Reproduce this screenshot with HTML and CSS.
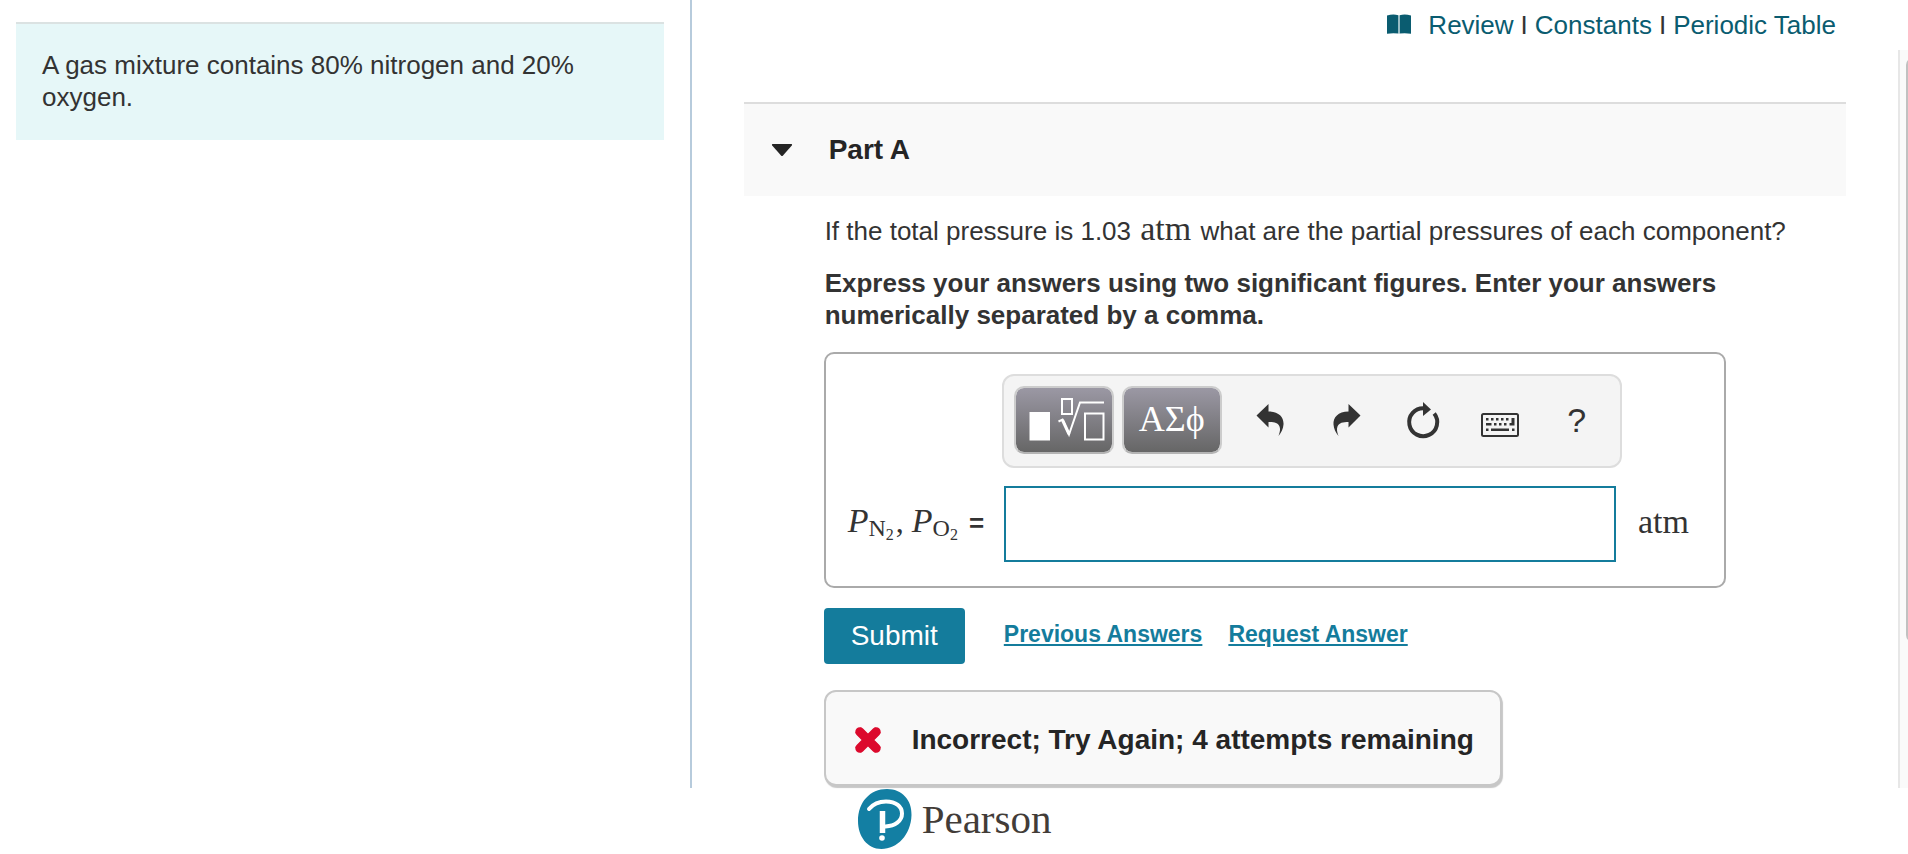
FILE: index.html
```html
<!DOCTYPE html>
<html lang="en">
<head>
    <meta charset="UTF-8">
    <meta name="viewport" content="width=device-width, initial-scale=1.0">
    <title>Part A</title>
    <link rel="stylesheet" href="styles.css">
</head>
<body>
    <div class="layout">
        <!-- Problem introduction -->
        <aside class="intro">
            <p class="intro-card">A gas mixture contains 80% nitrogen and 20% oxygen.</p>
        </aside>

        <main class="problem">
            <nav class="resources">
                <svg class="book-icon" width="24" height="20" viewBox="0 0 24 20" aria-hidden="true">
                    <path fill="#0a5c70" d="M0 1.500Q6 -.2 11.300 1.200V19.600Q6 18.600 0 19.800ZM12.700 1.200Q18 -.2 24 1.500V19.800Q18 18.600 12.700 19.600Z"/>
                    <path fill="#8bb5be" d="M11.300 1.500h1.400v18h-1.400z"/>
                </svg>
                <a href="#">Review</a> I <a href="#">Constants</a> I <a href="#">Periodic Table</a>
            </nav>

            <div class="scroll-area">
                <div class="content">
                    <button class="part-header" type="button">
                        <svg width="22" height="14" viewBox="0 0 22 14" aria-hidden="true">
                            <path fill="#252525" d="M1.800 1h18.400q1.600 0 .6 1.400L12 12.400q-1 1-2 0L1.200 2.400Q.2 1 1.800 1z"/>
                        </svg>
                        Part A
                    </button>

                    <div class="part-body">
                        <p class="question">If the total pressure is 1.03 <span class="unit">atm</span> what are the partial pressures of each component?</p>
                        <p class="instructions">Express your answers using two significant figures. Enter your answers numerically separated by a comma.</p>

                        <!-- Answer entry -->
                        <div class="answer-box">
                            <div class="toolbar">
                                <button class="palette" type="button" aria-label="Templates">
                                    <svg width="96" height="64" viewBox="2 2 96 64" fill="none" stroke="#fff" stroke-width="2">
                                        <path fill="#fff" stroke="none" d="M15.500 26H36v28.500H15.500z"/>
                                        <path d="M48 13h10v15H48zM71 27.500h18.500V53.500H71z"/>
                                        <path d="M44.500 35.500l4-2 6.500 15L66 16.500h24"/>
                                        <path stroke-width="3" d="M48.500 34l6.500 14"/>
                                    </svg>
                                </button>
                                <button class="palette" type="button">ΑΣϕ</button>
                                <div class="tools">
                                    <button type="button" aria-label="Undo">
                                        <svg width="40" height="40" viewBox="0 0 40 40">
                                            <path fill="#333" d="M6.500 15.500L18.500 4v7.500C29 11.500 34 17.500 33.500 24.500c-.3 4-2 8-5 11.500 1.500-4 2-7 1-9.500-1.500-3.800-5.500-4.500-11-4.500v5.500z"/>
                                        </svg>
                                    </button>
                                    <button type="button" aria-label="Redo">
                                        <svg width="40" height="40" viewBox="0 0 40 40">
                                            <path fill="#333" d="M33.500 15.500L21.500 4v7.500C11 11.500 6 17.500 6.500 24.500c.3 4 2 8 5 11.500-1.500-4-2-7-1-9.500 1.500-3.800 5.500-4.500 11-4.500v5.500z"/>
                                        </svg>
                                    </button>
                                    <button type="button" aria-label="Reset">
                                        <svg width="40" height="40" viewBox="0 0 40 40">
                                            <path fill="none" stroke="#333" stroke-width="4" d="M21 8.200A14 14 0 1 0 31.200 13.500"/>
                                            <path fill="#333" d="M20 2l8 7.500-8 6.500z"/>
                                        </svg>
                                    </button>
                                    <button type="button" aria-label="Keyboard shortcuts">
                                        <svg width="40" height="40" viewBox="0 0 40 40">
                                            <rect x="2" y="14" width="36" height="22" rx="1.500" fill="none" stroke="#333" stroke-width="2"/>
                                            <path fill="#333" d="M6 18h2.500v2.500H6zM11 18h2.500v2.500H11zM16 18h2.500v2.500H16zM21 18h2.500v2.500H21zM26 18h2.500v2.500H26zM31.500 18h3V25.500h-5v-2.500h2zM6 23h5.500V25.500H6zM14 23h2.500V25.500H14zM19 23h2.500V25.500H19zM24 23h2.500V25.500H24zM6 28.500h2.500v2.500H6zM11 28.500h18v2.500h-18zM32 28.500h2.500v2.500h-2.500z"/>
                                        </svg>
                                    </button>
                                    <button type="button">?</button>
                                </div>
                            </div>
                            <label class="answer-label" for="answer"><i>P</i><sub>N<sub>2</sub></sub><span class="comma">,</span><i>P</i><sub>O<sub>2</sub></sub><span class="equals">=</span></label>
                            <input class="answer-input" type="text" id="answer" name="answer">
                            <span class="answer-unit">atm</span>
                        </div>

                        <div class="actions">
                            <button class="submit" type="submit">Submit</button>
                            <a href="#">Previous Answers</a>
                            <a href="#">Request Answer</a>
                        </div>

                        <div class="feedback">
                            <svg width="28" height="28" viewBox="0 0 28 28" aria-hidden="true">
                                <path fill="none" stroke="#dc0a2d" stroke-width="8" stroke-linecap="square" d="M6.800 6.800l14.400 14.400M21.200 6.800L6.800 21.200"/>
                                <path fill="none" stroke="#dc0a2d" stroke-width="9" stroke-linecap="round" d="M5.800 5.800l16.400 16.400M22.200 5.800L5.800 22.200"/>
                            </svg>
                            Incorrect; Try Again; 4 attempts remaining
                        </div>
                    </div>
                </div>
                <div class="scroll-track"><div class="scroll-thumb"></div></div>
            </div>
        </main>

        <footer class="brand">
            <svg width="56" height="62" viewBox="0 0 56 62" aria-hidden="true">
                <path fill="#137fa3" d="M30 1C45 1 55 12 54.500 27 54 47 40 61 24.500 61 10 61 1 48 1 33 1 14 13 1 30 1z"/>
                <g fill="none" stroke="#fff" stroke-linecap="round">
                    <path stroke-width="4" d="M12 21C17 15 23 13.500 29 13.500 39 13.500 45 18.500 45 25.500 45 33 38 38 28.500 38.500"/>
                    <path stroke-width="5.500" stroke-linecap="butt" d="M25.500 23v22"/>
                </g>
                <circle cx="25" cy="50" r="2.800" fill="#fff"/>
            </svg>
            Pearson
        </footer>
    </div>
</body>
</html>
```

FILE: styles.css
```css
* {
    box-sizing: border-box;
}
body {
    margin: 0;
    background-color: #fff;
    color: #333;
    font-family: "Liberation Sans", Arial, sans-serif;
    font-size: 26px;
    line-height: 32px;
}
p {
    margin: 0;
}
button {
    font-family: inherit;
    cursor: pointer;
}
svg {
    display: block;
    flex-shrink: 0;
}
.layout {
    display: grid;
    grid-template-columns: 29fr 51fr;
}

/* Left column */
.intro {
    padding: 22px 26px 0 16px;
    border-right: 2px solid #b7cbdc;
}
.intro-card {
    padding: 25px 26px 27px;
    border-top: 2px solid #dbe2e2;
    background-color: #e6f7f8;
}

/* Right column */
.problem {
    min-width: 0;
}
.resources {
    display: flex;
    justify-content: flex-end;
    gap: 7px;
    height: 50px;
    padding: 9px 72px 0 0;
}
.resources a {
    color: #0a5c70;
    text-decoration: none;
}
.book-icon {
    margin: 5px 10px 0 0;
}
.scroll-area {
    display: flex;
}
.content {
    flex: 1;
    padding: 52px 52px 2px;
}
.scroll-track {
    width: 10px;
    padding: 8px 0 0 6px;
    border-left: 2px solid #e7e7e7;
    background-color: #fafafa;
    overflow: hidden;
}
.scroll-thumb {
    width: 14px;
    height: 80%;
    border-radius: 7px;
    background-color: #c1c1c1;
}
.part-header {
    display: flex;
    align-items: center;
    gap: 36px;
    width: 100%;
    height: 94px;
    padding: 0 28px 0 27px;
    border: none;
    border-top: 2px solid #ddd;
    background-color: #f9f9f9;
    color: #252525;
    font-size: 28px;
    font-weight: bold;
}
.part-body {
    padding: 19px 0 0 80px;
}
.question,
.instructions {
    margin-bottom: 20px;
    padding-left: 1px;
}
.instructions {
    font-weight: bold;
}
.unit,
.answer-unit {
    font-family: "Liberation Serif", "Times New Roman", serif;
    font-size: 34px;
    line-height: 1;
}
.unit {
    padding: 0 2px;
    line-height: 0;
}

/* Answer entry */
.answer-box {
    display: grid;
    grid-template-columns: 176px 1fr 102px;
    row-gap: 18px;
    align-items: center;
    margin: 21px 120px 0 0;
    padding: 20px 0 24px;
    border: 2px solid #aaa;
    border-radius: 10px;
}
.toolbar {
    grid-column: 2;
    display: flex;
    gap: 8px;
    padding: 10px 0 12px 10px;
    border: 2px solid #ddd;
    border-radius: 12px;
    background-color: #f4f4f4;
}
.palette {
    width: 100px;
    height: 68px;
    padding: 0 0 2px;
    border: 2px solid #ccc;
    border-bottom-color: #b4b4b4;
    border-radius: 10px;
    background: linear-gradient(#9b98a4, #666);
    background-clip: padding-box;
    color: #fff;
    font-family: "Liberation Serif", "Times New Roman", serif;
    font-size: 36px;
}
.tools {
    flex: 1;
    display: flex;
    margin: 0 5px 0 2px;
}
.tools button {
    flex: 1;
    display: flex;
    align-items: center;
    justify-content: center;
    padding: 0;
    border: none;
    background: none;
    color: #333;
    font-size: 34px;
}
.answer-label {
    grid-column: 1;
    display: flex;
    align-items: baseline;
    padding: 0 0 4px 22px;
    font-family: "Liberation Serif", "Times New Roman", serif;
    font-size: 34px;
}
.answer-label sub {
    font-size: 24px;
    line-height: 1;
    transform: translateY(4px);
}
.answer-label sub sub {
    font-size: 16px;
    vertical-align: -4px;
}
.answer-label .comma {
    margin: 0 8px 0 2px;
    font-size: 32px;
}
.answer-label .equals {
    margin-left: 11px;
    font-family: "Liberation Sans", Arial, sans-serif;
    font-size: 26px;
    font-weight: bold;
}
.answer-input {
    height: 76px;
    margin: 0 6px 0 2px;
    padding: 0 16px;
    border: 2px solid #147c9c;
    background-color: #fff;
    font-size: 26px;
    outline: none;
}
.answer-unit {
    padding: 0 0 4px 16px;
}

/* Actions and feedback */
.actions {
    display: flex;
    align-items: center;
    gap: 26px;
    margin: 20px 0 26px;
}
.submit {
    height: 56px;
    margin-right: 13px;
    padding: 0 27px;
    border: none;
    border-radius: 4px;
    background-color: #147c9c;
    color: #fff;
    font-size: 28px;
}
.actions a {
    padding-bottom: 4px;
    color: #147c9c;
    font-size: 23px;
    font-weight: bold;
}
.feedback {
    display: inline-flex;
    vertical-align: top;
    align-items: center;
    gap: 30px;
    height: 96px;
    padding: 4px 26px 0 28px;
    border: 2px solid #c7c7c7;
    border-radius: 12px;
    background-color: #f9f9f9;
    box-shadow: 1px 2px 1px #c7c7c7;
    color: #252525;
    font-size: 28px;
    font-weight: bold;
}
.brand {
    grid-column: 2;
    display: flex;
    align-items: center;
    gap: 9px;
    padding-left: 165px;
    color: #423c38;
    font-family: "Liberation Serif", "Times New Roman", serif;
    font-size: 41px;
}
```
